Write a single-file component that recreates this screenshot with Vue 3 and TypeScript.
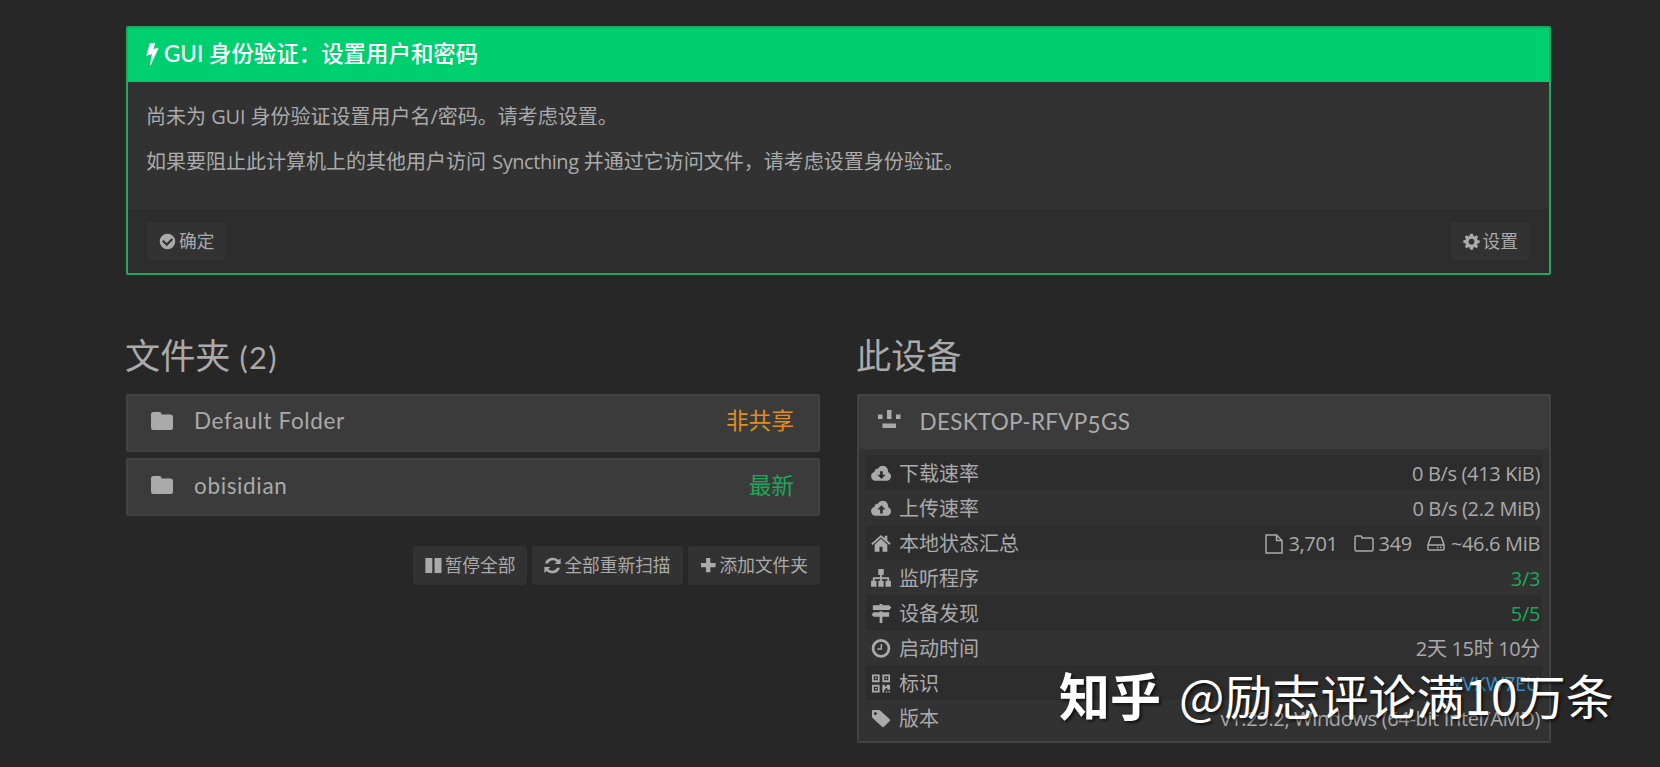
<script setup lang="ts">
interface Folder {
  name: string
  status: string
  tone: string
}
interface Row {
  icon: string
  label: string
  value: string
  tone?: string
}
interface Action {
  icon: string
  label: string
}

const icons: Record<string, string> = {
  download:
    'M20 9.1C20.2 5.5 17.8 2 14 2c-2.4 0-4.400 1.300-5.400 3.200C6.300 4.700 4.700 6.400 5 8.500 2.500 9.300 1 11.200 1 13.500 1 16.400 3.300 18.500 6 18.500h12c2.800 0 5-2 5-4.800 0-2.300-1.300-4-3-4.600zM11 8h3v4h3l-4.500 4.500L8 12h3z',
  upload:
    'M20 9.1C20.2 5.5 17.8 2 14 2c-2.400 0-4.400 1.300-5.400 3.200C6.300 4.700 4.700 6.400 5 8.500 2.500 9.300 1 11.200 1 13.500 1 16.400 3.300 18.500 6 18.500h12c2.800 0 5-2 5-4.800 0-2.300-1.300-4-3-4.600zM11 16v-4.500H8L12.500 7l4.500 4.500h-3V16z',
  home: 'M12 1 1.300 10.600l1.300 1.500 9.400-8.300 9.400 8.300 1.300-1.500-3.700-3.300V2h-3v2.600zM12 5.300 5 11.600V19.500h5.300v-5.500h3.400v5.500H19v-7.900z',
  sitemap:
    'M9 0h6v6.500h-2v2.700h8V13h2v6.500h-6V13h2v-2h-6v2h2v6.500H9V13h2v-2H5v2h2v6.500H1V13h2V9.200h8V6.500H9z',
  signs: 'M10.500 0h3v1.500H21L23.500 4 21 6.500H3v-5h7.500zM10.500 8h3v1H21v5h-7.500v7h-3v-7H4L1.500 11.500 4 9h6.500z',
  clock:
    'M12 0a10.300 10.300 0 1 0 0 20.600 10.300 10.300 0 0 0 0-20.600zm0 3a7.300 7.300 0 1 1 0 14.600 7.300 7.300 0 0 1 0-14.600zM11.500 5.500v4.700H8v1.600h5.200V5.500z',
  qrcode:
    'M2 .5h8.500V9H2zM4 2.500V7h4.500V2.500zM5.400 3.900h1.700v1.700H5.400zM13.500 .5H22V9h-8.500zM15.500 2.500V7H20V2.500zM16.900 3.900h1.700v1.700h-1.700zM2 12h8.500v8.500H2zM4 14v4.500h4.500V14zM5.400 15.400h1.700v1.700H5.400zM13.500 12h2.700v1.700h2V12H22v5.500h-3v-2h-2v2h-1.500V20.500h-2zM17 19h2v1.500h-2zM20.300 19H22v1.500h-1.700z',
  tag: 'M2 2.500C2 1.700 2.700 1 3.500 1H9c.9 0 2 .500 2.700 1.200l9.900 9c.600.600.600 1.500 0 2.100l-6.300 6.300c-.600.600-1.500.600-2.100 0L3.200 10.600C2.500 9.900 2 8.900 2 8zM5.800 3.200a1.700 1.700 0 1 0 0 3.400 1.700 1.700 0 0 0 0-3.400z',
  pause: 'M.5 1.500h9.800v21H.5zM13.500 1.500h9.800v21h-9.800z',
  refresh:
    'M23.500 1.500V10H15l3-3C14 3.300 8 4.300 5.800 9H1.500C3.300 1.200 13.800-2 20.500 4.400zM.5 22.500V14H9l-3 3c4 3.700 10 2.700 12.200-2h4.300C20.700 22.800 10.200 26 3.500 19.600z',
  plus: 'M8.600 1.500h6v7H22v6h-7.400v7h-6v-7H1.500v-6h7.100z',
  check:
    'M12 1a11 11 0 1 0 0 22 11 11 0 0 0 0-22zM6.500 9.800 11 14.200l6.700-6.700 2.200 2.200L11 18.600 4.300 12z',
  cog: 'M10 1h4l.6 3 1.800.8L19 3.200 21.400 5.700 19.800 8.200l.8 1.800 2.900.5v3.600l-2.900.6-.8 1.800 1.600 2.500L18.900 21.400l-2.500-1.600-1.800.8-.6 2.900h-4l-.6-2.900-1.800-.8-2.500 1.600L2.600 18.900l1.600-2.500-.8-1.800L.5 14v-3.600l2.900-.5.8-1.800L2.600 5.700 5.100 3.200l2.500 1.600 1.800-.8zM12 8.200a4 4 0 1 0 0 8 4 4 0 0 0 0-8z',
}

const folders: Folder[] = [
  { name: 'Default Folder', status: '非共享', tone: 'orange' },
  { name: 'obisidian', status: '最新', tone: 'green' },
]
const actions: Action[] = [
  { icon: 'pause', label: '暂停全部' },
  { icon: 'refresh', label: '全部重新扫描' },
  { icon: 'plus', label: '添加文件夹' },
]
const rows: Row[] = [
  { icon: 'download', label: '下载速率', value: '0 B/s (413 KiB)' },
  { icon: 'upload', label: '上传速率', value: '0 B/s (2.2 MiB)' },
  { icon: 'home', label: '本地状态汇总', value: '' },
  { icon: 'sitemap', label: '监听程序', value: '3/3', tone: 'green' },
  { icon: 'signs', label: '设备发现', value: '5/5', tone: 'green' },
  { icon: 'clock', label: '启动时间', value: '2天 15时 10分' },
  { icon: 'qrcode', label: '标识', value: 'YVKW7EU', tone: 'link' },
  { icon: 'tag', label: '版本', value: 'v1.29.2, Windows (64-bit Intel/AMD)' },
]
</script>

<template>
  <main class="page">
    <section class="notice">
      <header class="notice-head">
        <svg class="bolt" viewBox="0 0 12 21"><path d="M3.500 0h5.200L6.800 5.700 12 4.500 4.400 21H3.500L5.500 10.800 0 12.200z" /></svg>
        <h3>GUI 身份验证：设置用户和密码</h3>
      </header>
      <div class="notice-body">
        <p>尚未为 <span class="gui">GUI</span> 身份验证设置用户名/密码。请考虑设置。</p>
        <p>如果要阻止此计算机上的其他用户访问 <span class="sync">Syncthing</span> 并通过它访问文件，请考虑设置身份验证。</p>
      </div>
      <footer class="notice-foot">
        <button class="btn"><svg viewBox="0 0 24 24"><path :d="icons.check" /></svg>确定</button>
        <button class="btn"><svg viewBox="0 0 24 24"><path :d="icons.cog" /></svg>设置</button>
      </footer>
    </section>

    <div class="columns">
      <section class="column">
        <h2>文件夹 <span class="count">(2)</span></h2>
        <article v-for="f in folders" :key="f.name" class="folder">
          <svg class="folder-icon" viewBox="0 0 22 18">
            <path d="M2.500 0h6Q10.500 0 10.500 2v.5H19.500Q22 2.500 22 5v10.500Q22 18 19.500 18h-17Q0 18 0 15.500v-13Q0 0 2.500 0z" />
          </svg>
          <span class="name">{{ f.name }}</span>
          <span class="status" :class="f.tone">{{ f.status }}</span>
        </article>
        <div class="actions">
          <button v-for="a in actions" :key="a.label" class="btn">
            <svg viewBox="0 0 24 24"><path :d="icons[a.icon]" /></svg>{{ a.label }}
          </button>
        </div>
      </section>

      <section class="column">
        <h2>此设备</h2>
        <article class="device">
          <header class="device-head">
            <svg class="identicon" viewBox="0 0 5 5">
              <path d="M2 0h1v2H2zM0 1h1v1H0zM4 1h1v1H4zM1 3h3v1H1z" />
            </svg>
            <span class="name host">DESKTOP-RFVP<span class="low">5</span>GS</span>
          </header>
          <div class="rows">
            <div v-for="r in rows" :key="r.label" class="row">
              <svg class="row-icon" viewBox="0 0 24 21"><path :d="icons[r.icon]" /></svg>
              <span class="label">{{ r.label }}</span>
              <span v-if="r.icon === 'home'" class="value totals">
                <svg class="file" viewBox="0 0 18 20"><path d="M1 1h10.500L17 6.500V19H1zM11.500 1v5.500H17" /></svg>
                <span>3,701</span>
                <svg class="dir" viewBox="0 0 20 17"><path d="M1 14.500V2.500Q1 1 2.500 1h4Q8 1 8 3h9.500Q19 3 19 4.500v10Q19 16 17.500 16h-15Q1 16 1 14.500z" /></svg>
                <span>349</span>
                <svg class="disk" viewBox="0 0 18 15"><path d="M1 9 3.500 1.800Q3.800 1 4.700 1h8.600q.9 0 1.200.8L17 9v4q0 1-1 1H2q-1 0-1-1zM1 9h16M10 11.500h1.500M13 11.500h1.500" /></svg>
                <span>~46.6 MiB</span>
              </span>
              <span v-else class="value" :class="r.tone">{{ r.value }}</span>
            </div>
          </div>
        </article>
      </section>
    </div>

    <div class="watermark"><span class="brand">知乎</span><span class="author">@励志评论满10万条</span></div>
  </main>
</template>

<style>
body {
  background: #272727;
}
</style>

<style scoped>
* {
  box-sizing: border-box;
}
.page {
  position: relative;
  height: 767px;
  overflow: hidden;
  padding: 26px 109px 0 126px;
  background: #272727;
  color: #aaa;
  font: 20px/28px "Open Sans", "Noto Sans CJK SC", sans-serif;
}
svg {
  display: block;
  flex: none;
  fill: currentColor;
  fill-rule: evenodd;
}
h2,
h3,
p {
  margin: 0;
  font-weight: 400;
}
.notice {
  height: 249px;
  border: 2px solid #25a65d;
  border-radius: 2px;
  background: #323232;
}
.notice-head {
  display: flex;
  height: 54px;
  padding: 0 19px 3px 18px;
  align-items: center;
  background: #00cf70;
  color: #fff;
}
.bolt {
  width: 13px;
  height: 22px;
  margin-right: 5px;
}
h3 {
  font: 500 22.450px/28px Lato, "Noto Sans CJK SC", sans-serif;
}
.notice-body {
  height: 127px;
  padding: 21px 19px 0 18px;
  white-space: nowrap;
}
.notice-body p {
  margin-bottom: 17px;
}
.gui {
  letter-spacing: -0.2px;
}
.sync {
  margin-left: 1px;
  letter-spacing: -0.450px;
}
.notice-foot {
  display: flex;
  justify-content: space-between;
  height: 64px;
  padding: 13px 19px 0;
  background: #2d2d2d;
}
.btn {
  display: flex;
  height: 38px;
  align-items: center;
  padding: 0 12px;
  border: 0;
  border-radius: 3px;
  background: #323232;
  color: #aaa;
  font: 17.700px/25px "Open Sans", "Noto Sans CJK SC", sans-serif;
  white-space: nowrap;
}
.btn svg {
  width: 17px;
  height: 17px;
  margin-right: 3px;
}
.columns {
  display: grid;
  grid-template-columns: 694px 694px;
  column-gap: 37px;
  margin-top: 57px;
}
h2 {
  height: 62px;
  margin-left: -1px;
  font: 35.200px/47px Lato, "Noto Sans CJK SC", sans-serif;
}
.count {
  font-size: 31px;
  letter-spacing: 1.200px;
}
.folder {
  display: flex;
  height: 58px;
  margin-bottom: 6px;
  padding: 0 24px 4px 23px;
  align-items: center;
  border: 2px solid #424242;
  border-radius: 2px;
  background: #3b3b3b;
}
.folder-icon {
  width: 22px;
  height: 18px;
  margin-right: 21px;
}
.name {
  font: 22.500px/30px Lato, sans-serif;
  letter-spacing: 0.640px;
}
.folder + .folder span {
  padding-top: 2px;
}
.host {
  letter-spacing: 0.280px;
}
.low {
  line-height: 0;
  vertical-align: -2.500px;
}
.status {
  margin-left: auto;
  font-size: 22.700px;
}
.orange {
  color: #e08d20;
}
.green {
  color: #1ba957;
}
.link {
  color: #3291d0;
}
.actions {
  display: flex;
  justify-content: flex-end;
  gap: 5px;
  margin-top: 30px;
}
.actions .btn {
  height: 39px;
}
.device {
  height: 349px;
  border: 2px solid #424242;
  border-radius: 2px;
  background: #323232;
}
.device-head {
  display: flex;
  height: 53px;
  padding: 0 19px 2px;
  align-items: center;
  background: #3b3b3b;
}
.identicon {
  width: 22.500px;
  height: 22.500px;
  margin-right: 19px;
}
.rows {
  padding: 6px 7px 0;
}
.row {
  display: flex;
  height: 35px;
  padding: 1px 2px 0 4px;
  align-items: center;
}
.row:nth-child(odd) {
  background: #2d2d2d;
}
.row-icon {
  width: 22px;
  height: 19px;
  margin-right: 7px;
}
.label,
.value {
  padding-top: 1px;
}
.value {
  margin-left: auto;
  letter-spacing: -0.340px;
  white-space: nowrap;
}
.totals {
  display: flex;
  align-items: center;
}
.totals svg {
  fill: none;
  stroke: currentColor;
  stroke-width: 1.500;
}
.file {
  width: 18px;
  height: 20px;
  margin-right: 5px;
}
.dir {
  width: 20px;
  height: 17px;
  margin: 0 5px 0 16px;
}
.disk {
  width: 18px;
  height: 15px;
  margin: 0 6px 0 15px;
}
.watermark {
  position: absolute;
  left: 1059px;
  top: 659px;
  display: flex;
  color: #fff;
  font: 48px/70px "Noto Sans CJK SC", sans-serif;
  text-shadow: 2px 2px 3px rgba(0, 0, 0, 0.65);
  white-space: nowrap;
}
.brand {
  width: 120px;
  font-size: 51px;
  font-weight: 700;
}
</style>
